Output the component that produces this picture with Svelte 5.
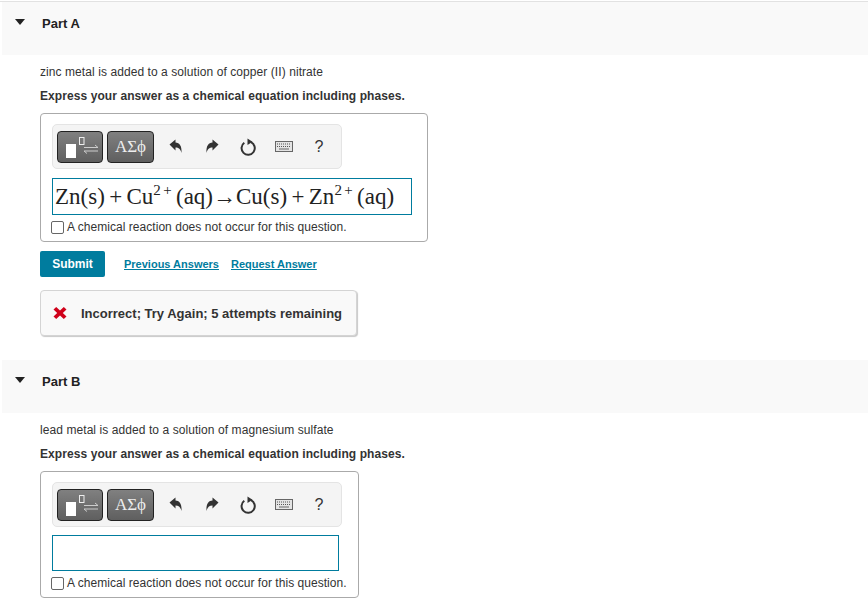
<script>
  const parts = [
    { id: 'A', prompt: 'zinc metal is added to a solution of copper (II) nitrate', filled: true },
    { id: 'B', prompt: 'lead metal is added to a solution of magnesium sulfate', filled: false }
  ];
</script>

<main class="page">
  {#each parts as part}
    <section class="part" class:first={part.filled}>
      <header class="head">
        <svg class="caret" width="10" height="6" viewBox="0 0 10 6"><path d="M0 0h10L5 6z" fill="#222" /></svg>
        <h2>Part {part.id}</h2>
      </header>
      <div class="body">
        <p class="prompt">{part.prompt}</p>
        <p class="express">Express your answer as a chemical equation including phases.</p>
        <div class="box" class:narrow={!part.filled}>
          <div class="toolbar">
            <button class="tpl" aria-label="Templates">
              <svg width="36" height="24" viewBox="0 0 36 24">
                <rect x="4" y="9" width="10" height="14" fill="#fff" />
                <rect x="17.500" y="2.500" width="4.500" height="7" fill="none" stroke="#eee" />
                <path d="M23 12.500h14l-3-2.500M37 16H23l3 2.500" fill="none" stroke="#ccc" stroke-width="1" transform="translate(-1 0)" />
              </svg>
            </button>
            <button class="tpl greek">ΑΣϕ</button>
            <span class="tool">
              <svg width="14" height="15" viewBox="0 0 14 15"><path d="M0.500 5.500 6.500 0.500v3c4 0 6.500 3.500 6 10.500-1-4-2.800-5.500-6-5.500v3z" fill="#333" /></svg>
            </span>
            <span class="tool">
              <svg width="14" height="15" viewBox="0 0 14 15"><path d="M13.500 5.500 7.500 0.500v3c-4 0-6.500 3.500-6 10.500 1-4 2.800-5.500 6-5.500v3z" fill="#333" /></svg>
            </span>
            <span class="tool">
              <svg width="18" height="18" viewBox="0 0 18 18"><path d="M5.300 4.800a6.600 6.600 0 1 0 6.700-.6" fill="none" stroke="#333" stroke-width="2" /><path d="M8.500 0.500v6.500L13.500 3.700z" fill="#333" /></svg>
            </span>
            <span class="tool">
              <svg width="18" height="11" viewBox="0 0 18 11"><rect x="0.500" y="0.500" width="17" height="10" fill="#e4e4e4" stroke="#666" /><path d="M2 3h14M2 5.500h14" stroke="#555" stroke-dasharray="1 1" /><path d="M4 8h10" stroke="#666" /></svg>
            </span>
            <span class="tool help">?</span>
          </div>
          <div class="input">
            {#if part.filled}
              <span class="math">Zn(s) + Cu<sup>2 +</sup> (aq)→Cu(s) + Zn<sup>2 +</sup> (aq)</span>
            {/if}
          </div>
          <label class="check"><span class="cb"></span>A chemical reaction does not occur for this question.</label>
        </div>
        {#if part.filled}
          <div class="actions">
            <button class="submit">Submit</button>
            <span class="link">Previous Answers</span>
            <span class="link">Request Answer</span>
          </div>
          <div class="feedback">
            <svg width="14" height="14" viewBox="0 0 14 14"><path d="M3.200 1 7 4.600 10.800 1 13.500 3.600 9.800 7l3.700 3.500-2.700 2.500L7 9.400 3.200 13 .5 10.500 4.200 7 .5 3.600z" fill="#d0021b" /></svg>
            <span>Incorrect; Try Again; 5 attempts remaining</span>
          </div>
        {/if}
      </div>
    </section>
  {/each}
</main>

<style>
  :global(body) { margin: 0; background: #fff; }
  .page {
    width: 868px;
    height: 602px;
    overflow: hidden;
    font-family: "Liberation Sans", Arial, sans-serif;
    font-size: 12px;
    color: #333;
  }
  .part { padding-left: 2px; }
  .part.first { border-top: 1px solid #e2e2e2; margin-top: 1px; height: 358px; }
  .head {
    height: 53px;
    background: #f9f9f9;
    display: flex;
    align-items: flex-start;
    box-sizing: border-box;
    padding: 14px 0 0 13px;
    gap: 17px;
  }
  .caret { margin-top: 3px; }
  h2 { margin: 0; font-size: 13px; line-height: 15px; font-weight: 700; color: #222; }
  .body { padding: 10px 0 0 38px; }
  .prompt { margin: 0; line-height: 14px; height: 14px; color: #333; letter-spacing: 0.075px; }
  .express { margin: 10px 0 0; line-height: 14px; font-weight: 700; color: #333; letter-spacing: 0.08px; }
  .box {
    margin-top: 10px;
    width: 388px;
    height: 129px;
    box-sizing: border-box;
    border: 1px solid #aaa;
    border-radius: 4px;
    padding: 10px 11px 0;
  }
  .box.narrow { width: 319px; height: 127px; }
  .toolbar {
    width: 290px;
    height: 45px;
    box-sizing: border-box;
    border: 1px solid #e4e4e4;
    border-radius: 5px;
    background: #f4f4f4;
    display: flex;
    align-items: center;
    padding-left: 4px;
  }
  .tpl {
    flex: none;
    width: 46px;
    height: 32px;
    padding: 0;
    border: 1px solid #222;
    border-radius: 4px;
    background: linear-gradient(#808080, #5f5f5f);
    display: flex;
    align-items: center;
    justify-content: center;
  }
  .greek {
    width: 47px;
    margin: 0 4px;
    font-family: "Liberation Serif", serif;
    font-size: 17px;
    color: #eee;
  }
  .tool {
    flex: none;
    width: 36px;
    height: 32px;
    display: flex;
    align-items: center;
    justify-content: center;
    color: #333;
  }
  .help { font-size: 16px; margin-left: -1px; }
  .input {
    margin-top: 9px;
    width: 360px;
    height: 37px;
    box-sizing: border-box;
    border: 1px solid #007c9e;
    padding-left: 2px;
    white-space: nowrap;
    overflow: hidden;
  }
  .narrow .input { width: 287px; height: 36px; margin-top: 8px; }
  .math {
    font-family: "Liberation Serif", serif;
    font-size: 23px;
    line-height: 35px;
    word-spacing: -1.4px;
    color: #222;
  }
  sup { font-size: 15px; line-height: 0; vertical-align: 9px; }
  .check {
    margin: 5px 0 0 -1px;
    display: flex;
    align-items: center;
    gap: 3px;
    line-height: 14px;
    color: #333;
    letter-spacing: 0.04px;
  }
  .cb {
    width: 11px;
    height: 11px;
    border: 1px solid #666;
    border-radius: 2px;
    background: #fff;
  }
  .actions {
    margin-top: 9px;
    display: flex;
    align-items: center;
    height: 26px;
  }
  .submit {
    width: 65px;
    height: 26px;
    padding: 0;
    border: 0;
    border-radius: 2px;
    background: #007c9e;
    color: #fff;
    font: 700 12px "Liberation Sans", Arial, sans-serif;
    margin-right: 19px;
  }
  .link {
    font-size: 11px;
    font-weight: 700;
    color: #007c9e;
    text-decoration: underline;
    margin-right: 12px;
  }
  .feedback {
    margin-top: 13px;
    width: 317px;
    height: 46px;
    box-sizing: border-box;
    border: 1px solid #d4d4d4;
    border-radius: 4px;
    background: #f9f9f9;
    box-shadow: 1px 1px 1px #c8c8c8;
    display: flex;
    align-items: center;
    padding-left: 12px;
    gap: 14px;
    font-size: 13px;
    font-weight: 700;
    color: #333;
  }
</style>
